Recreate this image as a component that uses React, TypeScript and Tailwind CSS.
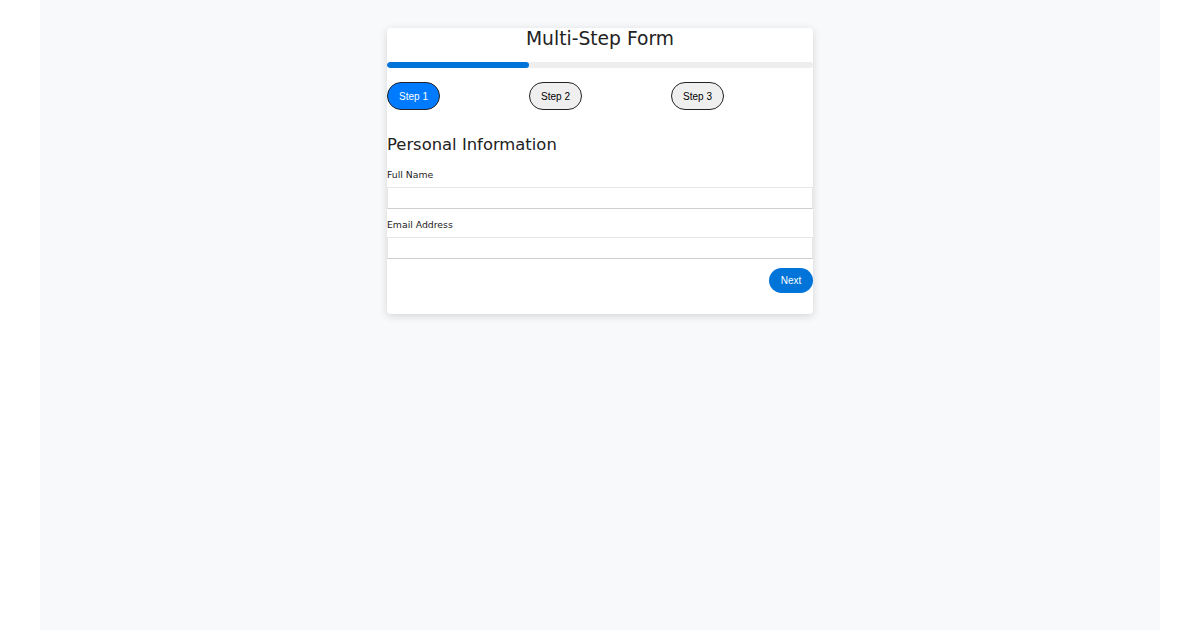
import React, { useState } from 'react'

const steps = ['Step 1', 'Step 2', 'Step 3']

export default function App () {
  const [current, setCurrent] = useState(0)

  return (
    <div className="min-h-[630px] bg-white">
      <div className="mx-auto max-w-[1120px] min-h-[630px] bg-[#f8f9fa] pt-[28px] font-['DejaVu_Sans',sans-serif] text-[#222]">
        <div className="mx-auto w-[426px] bg-white rounded-[4px] shadow-[0_2px_8px_rgba(0,0,0,0.15)] pb-[21px]">
          <h1 className="text-center text-[18.7px] leading-[22px] text-[#222]">
            Multi-Step Form
          </h1>
          <div className="mt-[12px] h-[6px] rounded-full bg-[#eeeeee] overflow-hidden">
            <div className="h-full w-1/3 rounded-full bg-[#0074d9]" />
          </div>
          <div className="mt-[14px] grid grid-cols-3">
            {steps.map((label, i) => (
              <div key={label}>
                <button
                  onClick={() => setCurrent(i)}
                  className={
                    'h-[28px] w-[53px] rounded-full border border-[#222] font-["Liberation_Sans",Arial,sans-serif] text-[10px] ' +
                    (i === current ? 'bg-[#007bff] text-white' : 'bg-[#efefef] text-black')
                  }
                >
                  {label}
                </button>
              </div>
            ))}
          </div>

          <h2 className="mt-[25px] text-[16.4px] leading-[19px] text-[#222]">
            Personal Information
          </h2>
          <label className="mt-[15px] block text-[9.3px] leading-[11px] text-[#222]">
            Full Name
          </label>
          <input
            type="text"
            className="mt-[7px] block h-[22px] w-full border border-[#e6e6e6] border-b-[#cfcfcf] bg-white outline-none"
          />
          <label className="mt-[10px] block text-[9.3px] leading-[11px] text-[#222]">
            Email Address
          </label>
          <input
            type="email"
            className="mt-[7px] block h-[22px] w-full border border-[#e6e6e6] border-b-[#cfcfcf] bg-white outline-none"
          />
          <div className="mt-[9px] flex justify-end">
            <button className="h-[25px] w-[44px] rounded-full bg-[#0074d9] font-['Liberation_Sans',Arial,sans-serif] text-[10px] text-white">
              Next
            </button>
          </div>
        </div>
      </div>
    </div>
  )
}
